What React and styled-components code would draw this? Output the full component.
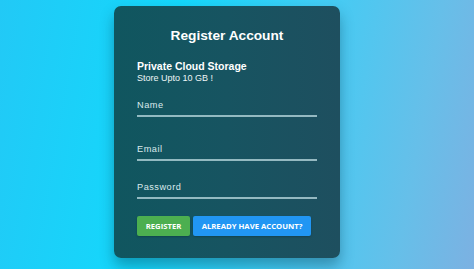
import React from "react";
import styled, { createGlobalStyle } from "styled-components";

const Global = createGlobalStyle`
	html, body {
		margin: 0;
		padding: 0;
		height: 100%;
	}
	body {
		font-family: "Liberation Sans", Arial, sans-serif;
		background: linear-gradient(100deg, #22c9f6 0%, #14d8fc 35%, #3fcdf5 60%, #66bfe9 85%, #7cb1e2 100%);
		overflow: hidden;
	}
	#root {
		height: 100%;
	}
`

const Page = styled.div`
	height: 100%;
	display: flex;
	justify-content: center;
	padding: 6px 20px 0 0;
	box-sizing: border-box;
`

const Card = styled.form`
	width: 226px;
	height: 252px;
	box-sizing: border-box;
	padding: 20px 23px 0;
	border-radius: 7px;
	background: linear-gradient(90deg, #10565f 0%, #175461 50%, #1e4f5f 100%);
	box-shadow: 0 8px 14px rgba(0, 40, 60, 0.35);
	display: flex;
	flex-direction: column;
	color: #fff;
`

const Title = styled.h2`
	margin: 0;
	font-size: 13.7px;
	line-height: 20px;
	font-weight: 700;
	text-align: center;
`

const Heading = styled.div`
	margin-top: 14px;
	font-size: 10.5px;
	line-height: 13px;
	font-weight: 700;
`

const Sub = styled.div`
	font-size: 9px;
	line-height: 11px;
	color: #eef5f6;
`

const Input = styled.input`
	margin-top: ${p => p.$gap}px;
	height: 23px;
	width: 100%;
	box-sizing: border-box;
	padding: 0;
	border: none;
	border-bottom: 2px solid rgba(190, 220, 226, 0.75);
	background: transparent;
	outline: none;
	font-family: "Liberation Sans", Arial, sans-serif;
	font-size: 9.2px;
	letter-spacing: 0.5px;
	color: #fff;
	&::placeholder {
		color: #dbeaed;
	}
`

const Actions = styled.div`
	margin-top: 17px;
	display: flex;
	gap: 3px;
`

const Button = styled.button`
	height: 20px;
	width: ${p => p.$width}px;
	padding: 0;
	border: none;
	border-radius: 2px;
	background: ${p => p.$color};
	color: #fff;
	font-family: "Open Sans", sans-serif;
	font-size: 7.7px;
	font-weight: 700;
	text-transform: uppercase;
	box-shadow: 0 1px 2px rgba(0, 0, 0, 0.2);
	cursor: pointer;
`

const App = () => {
	return (
		<>
			<Global />
			<Page>
				<Card onSubmit={e => e.preventDefault()}>
					<Title>Register Account</Title>
					<Heading>Private Cloud Storage</Heading>
					<Sub>Store Upto 10 GB !</Sub>
					<Input $gap={10} type="text" placeholder="Name" />
					<Input $gap={21} type="email" placeholder="Email" />
					<Input $gap={15} type="password" placeholder="Password" />
					<Actions>
						<Button $width={53} $color="#4caf50" type="submit">Register</Button>
						<Button $width={118} $color="#2196f3" type="button">Already have account?</Button>
					</Actions>
				</Card>
			</Page>
		</>
	)
};
export default App
